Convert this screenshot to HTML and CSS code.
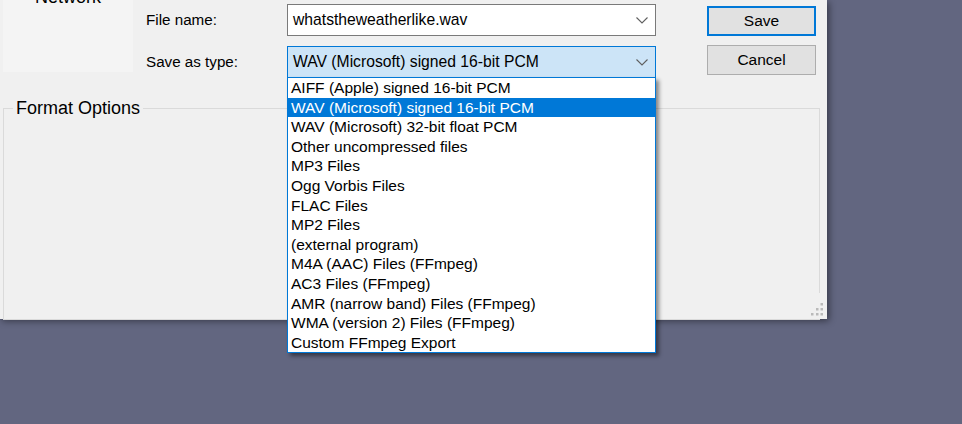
FILE: index.html
```
<!DOCTYPE html>
<html lang="en">

<head>
    <meta charset="UTF-8">
    <meta name="viewport" content="width=device-width, initial-scale=1.0">
    <title>Export Audio</title>
    <link rel="stylesheet" href="styles.css">
</head>

<body>
    <div class="dialog">
        <div class="top">
            <div class="nav-panel">
                <div class="nav-item">Network</div>
            </div>
            <div class="file-form">
                <label class="field-label">File name:</label>
                <div class="combo">
                    <span class="combo-text">whatstheweatherlike.wav</span>
                    <svg class="chevron" width="12" height="7" viewBox="0 0 12 7"><path d="M0.5 0.5 L6 6 L11.5 0.5" fill="none" stroke="#5f5f5f" stroke-width="1.1"/></svg>
                </div>
                <label class="field-label">Save as type:</label>
                <div class="combo combo-open">
                    <span class="combo-text">WAV (Microsoft) signed 16-bit PCM</span>
                    <svg class="chevron" width="12" height="7" viewBox="0 0 12 7"><path d="M0.5 0.5 L6 6 L11.5 0.5" fill="none" stroke="#5f5f5f" stroke-width="1.1"/></svg>
                    <ul class="type-list">
                        <li>AIFF (Apple) signed 16-bit PCM</li>
                        <li class="selected">WAV (Microsoft) signed 16-bit PCM</li>
                        <li>WAV (Microsoft) 32-bit float PCM</li>
                        <li>Other uncompressed files</li>
                        <li>MP3 Files</li>
                        <li>Ogg Vorbis Files</li>
                        <li>FLAC Files</li>
                        <li>MP2 Files</li>
                        <li>(external program)</li>
                        <li>M4A (AAC) Files (FFmpeg)</li>
                        <li>AC3 Files (FFmpeg)</li>
                        <li>AMR (narrow band) Files (FFmpeg)</li>
                        <li>WMA (version 2) Files (FFmpeg)</li>
                        <li>Custom FFmpeg Export</li>
                    </ul>
                </div>
            </div>
            <div class="buttons">
                <button type="button" class="btn btn-default">Save</button>
                <button type="button" class="btn">Cancel</button>
            </div>
        </div>
        <fieldset class="format-options">
            <legend>Format Options</legend>
        </fieldset>
        <svg class="gripper" width="26" height="26" viewBox="0 0 26 26">
            <rect x="19.5" y="10" width="2.5" height="2.5" fill="#bababa"/>
            <rect x="15" y="15" width="2.5" height="2.5" fill="#bababa"/>
            <rect x="19.5" y="15" width="2.5" height="2.5" fill="#bababa"/>
            <rect x="10" y="20" width="2.5" height="2.5" fill="#bababa"/>
            <rect x="15" y="20" width="2.5" height="2.5" fill="#bababa"/>
            <rect x="19.5" y="20" width="2.5" height="2.5" fill="#bababa"/>
        </svg>
    </div>
</body>

</html>
```

FILE: styles.css
```
body {
    margin: 0;
    background: #626680;
    font-family: "Liberation Sans", Arial, sans-serif;
    font-size: 15px;
    color: #000;
    height: 424px;
    overflow: hidden;
}

.dialog {
    position: relative;
    width: 827px;
    height: 319px;
    background: #f0f0f0;
    box-shadow: 2px 2px 7px rgba(0, 0, 0, 0.45);
}

.top {
    display: flex;
    height: 76px;
}

.nav-panel {
    width: 130px;
    height: 72px;
    margin-left: 3px;
    background: #f4f4f4;
}

.nav-item {
    margin-top: -13px;
    font-size: 18px;
    line-height: 20px;
    text-align: center;
}

.file-form {
    display: grid;
    grid-template-columns: 141px 369px;
    grid-template-rows: 32px 31px;
    row-gap: 10px;
    align-items: center;
    margin-left: 13px;
    padding-top: 4px;
}

.field-label {
    line-height: 18px;
    font-size: 15.2px;
}

.combo {
    position: relative;
    display: flex;
    align-items: center;
    justify-content: space-between;
    height: 100%;
    box-sizing: border-box;
    border: 1px solid #7a7a7a;
    background: #fff;
    padding: 0 7px 0 5px;
}

.combo-text {
    font-size: 15.7px;
}

.combo-open {
    border-color: #0078d7;
    background: #cce4f7;
    border-bottom: none;
}

.type-list {
    position: absolute;
    top: 100%;
    left: -1px;
    width: 369px;
    box-sizing: border-box;
    margin: 0;
    padding: 0;
    list-style: none;
    background: #fff;
    border: 1px solid #0078d7;
    box-shadow: 3px 3px 4px rgba(0, 0, 0, 0.45);
}

.type-list li {
    height: 19.6px;
    line-height: 19.6px;
    padding-left: 3px;
    font-size: 15.5px;
    white-space: nowrap;
}

.type-list .selected {
    background: #0078d7;
    color: #fff;
}

.buttons {
    display: flex;
    flex-direction: column;
    gap: 9px;
    margin-left: 51px;
    padding-top: 6px;
}

.btn {
    width: 109px;
    height: 30px;
    margin: 0;
    border: 1px solid #adadad;
    background: #e1e1e1;
    font-family: inherit;
    font-size: 15.5px;
    color: #000;
    padding: 0;
}

.btn-default {
    border: 2px solid #0078d7;
}

.format-options {
    width: 817px;
    height: 222px;
    box-sizing: border-box;
    margin: 22px 0 0 3px;
    padding: 0;
    border: 1px solid #dadada;
    min-width: 0;
}

.format-options legend {
    margin-left: 9px;
    padding: 0 3px;
    font-size: 18px;
    line-height: 20px;
}

.gripper {
    position: absolute;
    right: 0;
    bottom: 0;
    background: #f0f0f0;
}
```
